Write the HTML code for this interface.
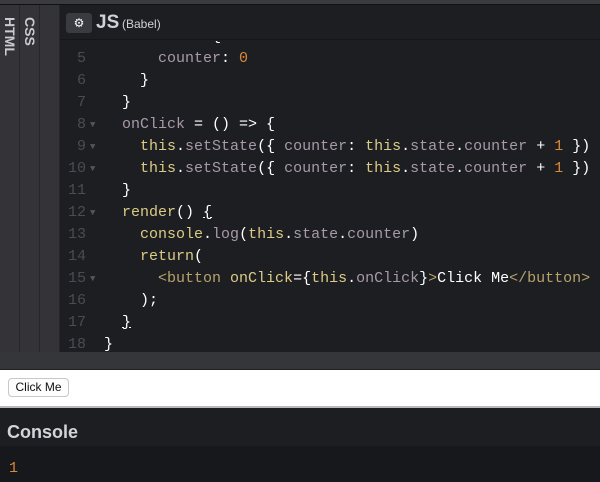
<!DOCTYPE html>
<html><head><style>
*{margin:0;padding:0;box-sizing:border-box}
body{width:600px;height:482px;overflow:hidden;background:#1d1e22;font-family:"Liberation Sans",sans-serif;position:relative}
.top{position:absolute;left:0;top:0;width:600px;height:5px;background:#3a3b3f;border-bottom:1px solid #111}
.col{position:absolute;top:5px;height:347px;background:#343438;border-right:1px solid #26272b}
.vt{position:absolute;color:#c9cbd1;font-weight:bold;font-size:14px;writing-mode:vertical-rl;top:12px;left:2px}
.hdr{position:absolute;left:60px;top:6px;width:540px;height:34px;background:#1d1e22;border-bottom:1px solid #151618}
.gear{position:absolute;left:6px;top:7px;width:26px;height:20px;background:#3a3b40;border-radius:3px;color:#fff;font-size:12px;text-align:center;line-height:20px}
.js{position:absolute;left:36px;top:6px;color:#cfd1d6;font-weight:bold;font-size:19px}
.bab{position:absolute;left:62px;top:11px;color:#cfd1d6;font-size:12px}
.code{position:absolute;left:60px;top:41px;width:540px;height:311px;overflow:hidden}
.ln{position:absolute;left:0;width:540px;height:22px;font-family:"Liberation Mono",monospace;font-size:15px;line-height:22px;white-space:pre;color:#fff}
.n{position:absolute;right:514px;color:#4b4c52;text-align:right}
.a{position:absolute;left:30px;color:#55565c;font-size:9px}
.c{position:absolute;left:44px}
.i{color:#a89aa9}.k{color:#dccb86}.o{color:#d9893b}.t{color:#b8a26c}
.bar{position:absolute;left:0;top:352px;width:600px;height:18px;background:#35363a;border-bottom:1px solid #222}
.res{position:absolute;left:0;top:370px;width:600px;height:38px;background:#fff;border-bottom:2px solid #b9b9b9}
.btn{position:absolute;left:8px;top:8px;width:61px;height:19px;border:1px solid #c8c8c8;border-radius:4px;background:#fdfdfd;font-size:12px;text-align:center;line-height:17px;color:#111}
.ch{position:absolute;left:0;top:410px;width:600px;height:36px;background:#1d1e22;color:#d3d4d9;font-weight:bold;font-size:18px;padding:12px 0 0 7px}
.cb{position:absolute;left:0;top:446px;width:600px;height:36px;background:#17181b;color:#d9893b;font-family:"Liberation Mono",monospace;font-size:15px;padding:14px 0 0 9px}
</style></head><body>
<div class="top"></div>
<div class="col" style="left:0;width:20px"><div class="vt">HTML</div></div>
<div class="col" style="left:20px;width:20px"><div class="vt">CSS</div></div>
<div class="col" style="left:40px;width:20px"></div>
<div class="code">
<div class="ln" style="top:-15px"><span class="n">4</span><span class="c">    <span class="i">state</span> = {</span></div>
<div class="ln" style="top:7px"><span class="n">5</span><span class="c">      <span class="i">counter</span>: <span class="o">0</span></span></div>
<div class="ln" style="top:29px"><span class="n">6</span><span class="c">    }</span></div>
<div class="ln" style="top:51px"><span class="n">7</span><span class="c">  }</span></div>
<div class="ln" style="top:73px"><span class="n">8</span><span class="a">▼</span><span class="c">  <span class="i">onClick</span> = () =&gt; {</span></div>
<div class="ln" style="top:95px"><span class="n">9</span><span class="a">▼</span><span class="c">    <span class="k">this</span>.<span class="i">setState</span>({ <span class="i">counter</span>: <span class="k">this</span>.<span class="i">state</span>.<span class="i">counter</span> + <span class="o">1</span> })</span></div>
<div class="ln" style="top:117px"><span class="n">10</span><span class="a">▼</span><span class="c">    <span class="k">this</span>.<span class="i">setState</span>({ <span class="i">counter</span>: <span class="k">this</span>.<span class="i">state</span>.<span class="i">counter</span> + <span class="o">1</span> })</span></div>
<div class="ln" style="top:139px"><span class="n">11</span><span class="c">  }</span></div>
<div class="ln" style="top:161px"><span class="n">12</span><span class="a">▼</span><span class="c">  <span class="k">render</span>() <u>{</u></span></div>
<div class="ln" style="top:183px"><span class="n">13</span><span class="c">    <span class="k">console</span>.<span class="i">log</span>(<span class="k">this</span>.<span class="i">state</span>.<span class="i">counter</span>)</span></div>
<div class="ln" style="top:205px"><span class="n">14</span><span class="c">    <span class="k">return</span>(</span></div>
<div class="ln" style="top:227px"><span class="n">15</span><span class="a">▼</span><span class="c">      <span class="t">&lt;button</span> <span class="k">onClick</span>={<span class="k">this</span>.<span class="i">onClick</span>}<span class="t">&gt;</span>Click Me<span class="t">&lt;/button&gt;</span></span></div>
<div class="ln" style="top:249px"><span class="n">16</span><span class="c">    );</span></div>
<div class="ln" style="top:271px"><span class="n">17</span><span class="c">  <u>}</u></span></div>
<div class="ln" style="top:293px"><span class="n">18</span><span class="c">}</span></div>
</div>
<div class="hdr"><div class="gear">⚙</div><div class="js">JS</div><div class="bab">(Babel)</div></div>
<div class="bar"></div>
<div class="res"><div class="btn">Click Me</div></div>
<div class="ch">Console</div>
<div class="cb">1</div>
</body></html>
